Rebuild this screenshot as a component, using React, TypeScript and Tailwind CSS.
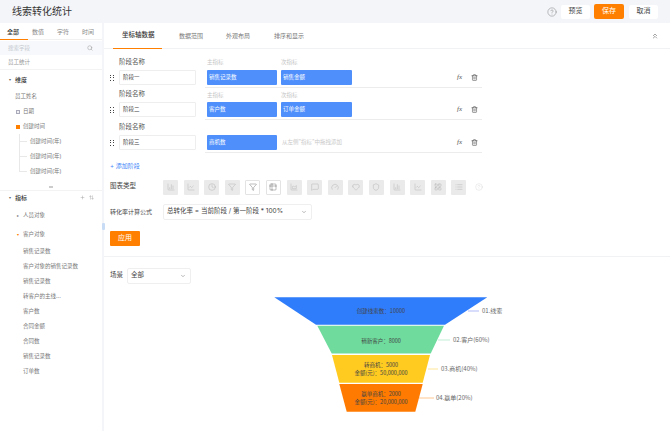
import { BarChart3, ChartLine, ChevronDown, ChevronsUp, CircleHelp, Clock, Filter, Funnel, Gauge, LayoutGrid, List, MessageSquare, Plus, Search, Table2, AreaChart, Trash2, ArrowUpDown, Heart, Shield, ChartColumn } from "lucide-react";

const sideTabs = ["全部", "数值", "字符", "时间"];
const mainTabs = ["坐标轴数据", "数据范围", "外观布局", "排序和显示"];
const measures = ["销售记录数", "客户对象的销售记录数", "销售记录数", "转客户的主线...", "客户数", "合同金额", "合同数", "销售记录数", "订单数"];
const rows = [
  { name: "阶段一", main: "销售记录数", sub: "销售金额" },
  { name: "阶段二", main: "客户数", sub: "订单金额" },
  { name: "阶段三", main: "商机数", sub: "" },
];
const chartIcons = [
  { Icon: BarChart3, on: false },
  { Icon: ChartLine, on: false },
  { Icon: Clock, on: false },
  { Icon: Funnel, on: false },
  { Icon: Filter, on: true },
  { Icon: Table2, on: true },
  { Icon: AreaChart, on: false },
  { Icon: MessageSquare, on: false },
  { Icon: Gauge, on: false },
  { Icon: Heart, on: false },
  { Icon: Shield, on: false },
  { Icon: ChartColumn, on: false },
  { Icon: ChartLine, on: false },
  { Icon: LayoutGrid, on: false },
  { Icon: List, on: false },
];

function Header() {
  return (
    <div className="h-[23px] bg-[#f3f5f8] flex items-center pl-3 pr-3 shrink-0">
      <div className="text-[10px] text-[#333] flex-1">线索转化统计</div>
      <CircleHelp size={10} strokeWidth={1} className="text-[#666] mr-[4px]" />
      <button className="w-[29px] h-[14px] bg-white rounded-[2px] text-[7px] text-[#444]">预览</button>
      <button className="w-[30px] h-[15px] ml-[4px] bg-[#ff8000] rounded-[2px] text-[7px] text-white">保存</button>
      <button className="w-[29px] h-[14px] ml-[5px] bg-white rounded-[2px] text-[7px] text-[#444]">取消</button>
    </div>
  );
}

function Sidebar() {
  return (
    <div className="w-[102px] bg-white shrink-0 text-[5.5px] text-[#777]">
      <div className="h-[17px] flex items-center justify-between pl-[7px] pr-[8px] text-[6px] border-b border-[#f1f1f1] relative">
        {sideTabs.map((t, i) => (
          <span key={t} className={i === 0 ? "text-[#333] font-medium" : "text-[#888]"}>{t}</span>
        ))}
        <div className="absolute left-0 bottom-[-1px] w-[28px] h-[1px] bg-[#ff8000]" />
      </div>
      <div className="h-[14px] mt-[1px] bg-[#f6f8fb] flex items-center justify-between pl-[8px] pr-[9px] text-[#c4c8cf]">
        <span>搜索字段</span>
        <Search size={6} className="text-[#999]" />
      </div>
      <div className="h-[15px] pl-[8px] flex items-center border-b border-[#f3f3f3] text-[#999]">员工统计</div>
      <div className="h-[19px] pl-[15px] flex items-center text-[6px] font-medium text-[#333] relative">
        <span className="absolute left-[9px] text-[4px] text-[#666]">▾</span>维度
      </div>
      <div className="h-[15px] pl-[15px] flex items-center">员工姓名</div>
      <div className="h-[15px] pl-[16px] flex items-center gap-[3px]">
        <span className="w-[4px] h-[4px] border border-[#aab] bg-[#eef0f4]" />日期
      </div>
      <div className="h-[15px] pl-[16px] flex items-center gap-[3px]">
        <span className="w-[4px] h-[4px] bg-[#ff8000]" />创建时间
      </div>
      <div className="ml-[19px] border-l border-[#e8e8e8] h-[38px] mb-[12px] flex flex-col">
        {["创建时间(年)", "创建时间(年)", "创建时间(年)"].map((t, i) => (
          <div key={i} className="h-[15px] flex items-center gap-[3px] shrink-0">
            <span className="w-[7px] h-px bg-[#e8e8e8]" />
            {t}
          </div>
        ))}
      </div>
      <div className="h-[6px] flex items-center justify-center">
        <span className="w-[4px] h-[2px] bg-[#ccc]" />
      </div>
      <div className="h-[14px] pl-[15px] pr-[8px] flex items-center justify-between text-[6px] font-medium text-[#333] relative border-t border-[#f3f3f3]">
        <span className="absolute left-[9px] text-[4px] text-[#666]">▾</span>指标
        <span className="flex gap-[4px] text-[#999]">
          <Plus size={5} />
          <ArrowUpDown size={5} />
        </span>
      </div>
      <div className="h-[19px] mt-[2px] pl-[23px] flex items-center relative">
        <span className="absolute left-[17px] text-[4px]">▸</span>人员对象
      </div>
      <div className="h-[19px] pl-[23px] flex items-center relative">
        <span className="absolute left-[17px] text-[4px] text-[#ff8000]">▾</span>客户对象
      </div>
      <div className="mt-[0px]">
        {measures.map((m, i) => (
          <div key={i} className="h-[15px] pl-[23px] flex items-center">{m}</div>
        ))}
      </div>
    </div>
  );
}

function DragDots() {
  return (
    <div className="grid grid-cols-2 gap-x-[1.5px] gap-y-[1.5px] w-[4px] ml-[6px] mb-[7px] shrink-0">
      {[0, 1, 2, 3, 4, 5].map((d) => (
        <span key={d} className="w-[1px] h-[1px] bg-[#444]" />
      ))}
    </div>
  );
}

function StageRow({ name, main, sub }: { name: string; main: string; sub: string }) {
  return (
    <div className="h-[32.5px] flex items-end">
      <DragDots />
      <div className="ml-[5px] w-[77px]">
        <div className="text-[6.5px] text-[#555] h-[14px] flex items-center">阶段名称</div>
        <div className="h-[15px] mb-[3px] border border-[#eeeeee] rounded-[1px] pl-[3px] flex items-center text-[5.5px] text-[#444]">{name}</div>
      </div>
      <div className="ml-[9px] w-[277px] border-b border-[#ececec] flex pl-[2px] pb-[2px]">
        <div className="w-[70px]">
          <div className="text-[5.5px] text-[#c4c4c4] h-[14px] flex items-center">{sub ? "主指标" : ""}</div>
          <div className="h-[15px] bg-[#4f8ffb] rounded-[1px] text-[5.5px] text-white flex items-center pl-[2px]">{main}</div>
        </div>
        <div className="w-[71px] ml-[4px]">
          <div className="text-[5.5px] text-[#c4c4c4] h-[14px] flex items-center">{sub ? "次指标" : ""}</div>
          {sub ? (
            <div className="h-[15px] bg-[#4f8ffb] rounded-[1px] text-[5.5px] text-white flex items-center pl-[2px]">{sub}</div>
          ) : (
            <div className="h-[15px] text-[5.5px] text-[#c9c9c9] flex items-center pl-[1px] whitespace-nowrap">从左侧"指标"中拖拽添加</div>
          )}
        </div>
        <div className="flex-1 flex items-end justify-end pb-[4px] pr-[4px] gap-[9px]">
          <span className="text-[7px] italic font-['Liberation_Serif',serif] text-[#555] leading-none">fx</span>
          <Trash2 size={7} className="text-[#555]" />
        </div>
      </div>
    </div>
  );
}

function ConfigPanel() {
  return (
    <div className="h-[208px] border-b border-[#f1f2f4] shrink-0">
      <div className="pt-[6px]">
        {rows.map((r) => (
          <StageRow key={r.name} {...r} />
        ))}
      </div>
      <div className="ml-[6px] mt-[8px] text-[6px] text-[#3f86f7] h-[9px] flex items-center">+ 添加阶段</div>
      <div className="ml-[6px] mt-[10px] flex items-center">
        <div className="w-[53px] text-[6.5px] text-[#444]">图表类型</div>
        <div className="flex gap-[5.6px]">
          {chartIcons.map(({ Icon, on }, i) => (
            <div key={i} className={`w-[15px] h-[15px] rounded-[1px] flex items-center justify-center ${on ? "bg-white border border-[#e3e3e3]" : "bg-[#eaeaea]"}`}>
              <Icon size={8} strokeWidth={1.2} className={on ? "text-[#555]" : "text-[#a8a8a8]"} />
            </div>
          ))}
        </div>
        <CircleHelp size={8} strokeWidth={1} className="text-[#ccc] ml-[9px]" />
      </div>
      <div className="ml-[6px] mt-[9px] flex items-center">
        <div className="w-[53px] text-[6px] text-[#444] whitespace-nowrap">转化率计算公式</div>
        <div className="w-[149px] h-[16px] border border-[#efefef] rounded-[2px] pl-[3px] pr-[4px] flex items-center justify-between text-[6.5px] text-[#444]">
          总转化率 = 当前阶段 / 第一阶段 * 100%
          <ChevronDown size={6} className="text-[#777]" />
        </div>
      </div>
      <button className="ml-[6px] mt-[11px] block w-[30px] h-[15px] bg-[#ff8000] rounded-[1px] text-[7px] text-white">应用</button>
    </div>
  );
}

function FunnelChart() {
  return (
    <svg viewBox="104 290 566 141" className="w-[566px] h-[141px] block">
      <polygon points="274.3,297.3 487.3,297.3 445,324.7 316,324.7" fill="#2f7dfb" />
      <polygon points="317.3,325.7 444,325.7 430.7,353.5 331.7,353.5" fill="#6fdc9e" />
      <polygon points="332,355 430,355 422.7,382.7 339.3,382.7" fill="#ffcb21" />
      <polygon points="339.3,384 422.7,384 415.3,411.7 346.7,411.7" fill="#ff7a00" />
      <g fontSize="5.5" fill="#444" fontFamily="'Noto Sans CJK SC', sans-serif" textAnchor="middle">
        <text x="381" y="313">创建线索数：10000</text>
        <text x="381" y="342.5">稍新客户：8000</text>
        <text x="381" y="367">转商机：5000</text>
        <text x="381" y="375">金额(元)：50,000,000</text>
        <text x="381" y="396">赢单商机：2000</text>
        <text x="381" y="404">金额(元)：20,000,000</text>
      </g>
      <g strokeWidth="0.7">
        <line x1="468" y1="311" x2="479" y2="311" stroke="#8f9df5" />
        <line x1="438" y1="340" x2="450" y2="340" stroke="#a9e6c4" />
        <line x1="428" y1="369" x2="438" y2="369" stroke="#ffdc6b" />
        <line x1="419" y1="398" x2="434" y2="398" stroke="#ffb066" />
      </g>
      <g fontSize="6" fill="#666" fontFamily="'Noto Sans CJK SC', sans-serif">
        <text x="482" y="313">01.线索</text>
        <text x="453" y="342">02.客户(60%)</text>
        <text x="441" y="371">03.商机(40%)</text>
        <text x="436" y="400">04.赢单(20%)</text>
      </g>
    </svg>
  );
}

export default function App() {
  return (
    <div className="w-[670px] h-[431px] overflow-hidden flex flex-col bg-[#f3f5f8] font-['Inter','Noto_Sans_CJK_SC',sans-serif]">
      <Header />
      <div className="flex flex-1 min-h-0">
        <Sidebar />
        <div className="w-[566px] ml-[2px] bg-white relative flex flex-col">
          <div className="absolute left-[-2px] top-[200px] w-[3px] h-[7px] bg-[#c9dcf5] rounded-[1px]" />
          <div className="h-[26px] border-b border-[#f1f2f4] flex items-center text-[6px] text-[#777] shrink-0 relative">
            <span className="absolute left-[18px] text-[6.5px] font-medium text-[#333]">{mainTabs[0]}</span>
            <div className="absolute left-[9px] bottom-[-1px] w-[49px] h-[1px] bg-[#ff8000]" />
            <span className="absolute left-[75px]">{mainTabs[1]}</span>
            <span className="absolute left-[122px]">{mainTabs[2]}</span>
            <span className="absolute left-[170px]">{mainTabs[3]}</span>
            <ChevronsUp size={8} className="absolute right-[11px] text-[#777]" />
          </div>
          <ConfigPanel />
          <div className="flex items-center pl-[6px] mt-[11px] text-[6.5px] text-[#444] shrink-0">
            <span className="w-[17px]">场景</span>
            <div className="w-[64px] h-[16px] border border-[#efefef] rounded-[2px] pl-[3px] pr-[4px] flex items-center justify-between">
              全部
              <ChevronDown size={6} className="text-[#777]" />
            </div>
          </div>
          <div className="mt-[6px]">
            <FunnelChart />
          </div>
        </div>
      </div>
    </div>
  );
}
